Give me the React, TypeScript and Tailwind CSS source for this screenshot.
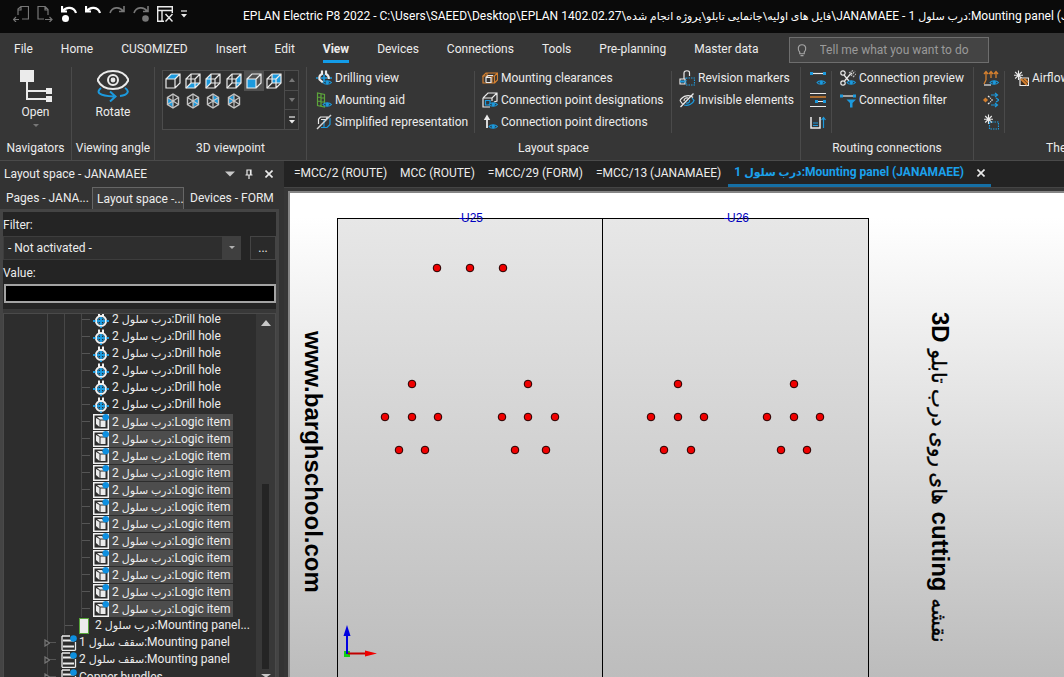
import React, { useState } from 'react';

const menuTabs = ['File', 'Home', 'CUSOMIZED', 'Insert', 'Edit', 'View', 'Devices', 'Connections', 'Tools', 'Pre-planning', 'Master data'];

const docTabs = ['=MCC/2 (ROUTE)', 'MCC (ROUTE)', '=MCC/29 (FORM)', '=MCC/13 (JANAMAEE)'];

const W = '#ebebeb';
const B = '#1c9ade';
const O = '#d5802f';

type IconProps = { children: React.ReactNode; size?: string; box?: string };

const Icon: React.FC<IconProps> = ({ children, size = 'h-4 w-4', box = '0 0 16 16' }) => (
  <svg className={`${size} shrink-0`} viewBox={box} fill="none" stroke={W} strokeWidth="1.2" aria-hidden="true">
    {children}
  </svg>
);

// Persian runs are set one size down, the glyphs are larger than the Latin ones
const Fa: React.FC<{ children: React.ReactNode }> = ({ children }) => <span className="text-[11px]">{children}</span>;

// Small blue eye shown in the lower right corner of many commands
const EyeBadge = () => (
  <g stroke={B} strokeWidth="1.1">
    <path d="M7 12.5C8.5 10.3 13.5 10.3 15.5 12.5C13.5 14.9 8.5 14.9 7 12.5Z" fill="#28404e" />
    <circle cx="11.3" cy="12.5" r="1.1" fill={B} />
  </g>
);

const cubeFaces: Record<string, string> = {
  top: '1,6 6,1 15,1 10,6',
  bottom: '1,15 6,10 15,10 10,15',
  left: '1,6 6,1 6,10 1,15',
  right: '10,6 15,1 15,10 10,15',
  front: '1,6 10,6 10,15 1,15',
  back: '6,1 15,1 15,10 6,10',
};

const Cube: React.FC<{ face: string }> = ({ face }) => (
  <Icon>
    <polygon points={cubeFaces[face]} fill={B} stroke="none" />
    <path d="M1 6H10V15H1ZM1 6L6 1H15V10L10 15M10 6L15 1" />
    {face !== 'top' && face !== 'front' && <path d="M6 1V10H15M6 10L1 15" />}
  </Icon>
);

const isoFaces: Record<string, string> = {
  sw: '3,5 8,9 8,14 3,11',
  se: '13,5 8,9 8,14 13,11',
  ne: '8,2 13,5 13,11 8,7',
  nw: '8,2 3,5 3,11 8,7',
};

const IsoCube: React.FC<{ face: string }> = ({ face }) => (
  <Icon>
    <polygon points={isoFaces[face]} fill={B} stroke="none" />
    <path d="M8 1L13.5 4.5V11.5L8 15L2.5 11.5V4.5Z" stroke="#c4c4c4" strokeWidth="1.4" />
    <path d="M2.5 4.5L8 8L13.5 4.5M8 8V15M2.5 11.5L8 8L13.5 11.5M8 1V8" stroke="#c4c4c4" />
  </Icon>
);

const DrillIcon = () => (
  <Icon>
    <path d="M6 0.500V4.500M10 0.500V4.500" stroke="#f2f2f2" strokeWidth="2" />
    <circle cx="8" cy="9" r="5" stroke="#f2f2f2" strokeWidth="2.200" />
    <circle cx="8" cy="9" r="3.300" fill="#2d2d2d" stroke={B} strokeWidth="1" />
    <path d="M0 9H2.500M4 9H12M13.500 9H16M8 5V13M8 14.500V16" stroke={B} strokeWidth="2" />
  </Icon>
);

const LogicIcon = () => (
  <Icon>
    <rect x="0.75" y="0.75" width="14.500" height="14.500" fill="#2d2d2d" stroke="#f2f2f2" strokeWidth="1.500" />
    <path d="M3 4L6.500 6V13L3 10Z" fill={W} stroke="none" />
    <path d="M4 3H9L12 5.500H7Z" fill={W} stroke="none" />
    <path d="M7.500 6.500H12.500V13H7.500Z" fill={W} stroke="none" />
    <circle cx="12.800" cy="3.300" r="3.300" fill="#0d8fe0" stroke="none" />
  </Icon>
);

const RailIcon = () => (
  <Icon>
    <path d="M1 1H9M1 1V15.300M14.500 7V15.300M1 15.300H14.500" strokeWidth="1.300" />
    <path d="M2 5.500H13M2 11.500H13" strokeWidth="2" />
    <circle cx="12.500" cy="3.500" r="3.300" fill="#0d8fe0" stroke="none" />
  </Icon>
);

const Snow = () => <path d="M5.500 0.500V10M1 5.200H10M2.200 2L8.800 8.500M8.800 2L2.200 8.500" strokeWidth="1.100" />;

const DrillingView = () => (
  <Icon>
    <path d="M6 0.500V4C3.500 5 3 7 3.500 9.500L7 12.500M10 0.500V4C12 5 13 6.500 12.800 9" strokeWidth="2.200" />
    <path d="M0 8H2M5 8H11M14 8H16M8 4.500V11" stroke={B} strokeWidth="1.700" />
    <EyeBadge />
  </Icon>
);

const MountingAid = () => (
  <Icon>
    <path d="M1.500 1V13.500L8.500 15V2.500ZM5 2V14M1.500 5L8.500 6M1.500 9L8.500 10" stroke="#5da53b" />
    <EyeBadge />
  </Icon>
);

const Simplified = () => (
  <Icon>
    <path d="M2.500 5L4.500 3H11.500L10 5.500M2.500 5V10M5 5.500H10" />
    <path d="M5 13.500H11L14 10.500V4M8 6V13" stroke={B} />
    <path d="M1 15L15 1" stroke="#d5d5d5" strokeWidth="1.400" />
  </Icon>
);

const Clearances = () => (
  <Icon>
    <path d="M1 6L4 3H15.500L12.500 6ZM1 6V13H12.500V6M12.500 13L15.500 10V3M5 3V6M10 13V6" stroke={O} />
    <path d="M4 12.500V7.500L6 5.500H11M4 7.500H9V12.500H4" />
  </Icon>
);

const Designations = () => (
  <Icon>
    <path d="M1 6L6 1H15V9L12 10M1 6H10L15 1M10 6V9M1 6V15H8" />
    <path d="M3.500 8.500H8V13H3.500Z" stroke={B} />
    <EyeBadge />
  </Icon>
);

const Directions = () => (
  <Icon>
    <path d="M5 14V5" strokeWidth="1.800" />
    <path d="M1.800 6L5 0.500L8.200 6Z" fill={W} stroke="none" />
    <EyeBadge />
  </Icon>
);

const Revision = () => (
  <Icon>
    <path d="M5 8.500V3C5 0 11 0 10.500 3V6M1 9H6V14H1Z" />
    <path d="M1 11.500H6" stroke={B} strokeWidth="2" />
    <path d="M7 8H15.500V15H7Z" stroke={B} strokeDasharray="1.500 1" />
  </Icon>
);

const Invisible = () => (
  <Icon>
    <path d="M1 8.500C4 3 11 2.500 14 5.500M3.500 12L1 8.500M5 9C5 6.500 7 5.500 9 6" />
    <path d="M5 13C9 14 14 12 15 8.500L13 6M7 11C10 11.500 11 9.500 10.500 8" stroke={B} />
    <path d="M1.500 15L14.500 1.500" strokeWidth="1.300" />
  </Icon>
);

const RouteView = () => (
  <Icon>
    <path d="M1 3.500H15" />
    <path d="M0 2H3V5H0ZM13 2H16V5H13Z" fill={B} stroke="none" />
    <EyeBadge />
  </Icon>
);

const RouteLines = () => (
  <Icon>
    <path d="M0 1.500H16M0 14.500H16M6 9.500H15" />
    <path d="M0 5H16" stroke={O} strokeWidth="1.500" />
    <path d="M5 8H8V11H5ZM13 8H16V11H13Z" fill={B} stroke="none" />
  </Icon>
);

const DuctFill = () => (
  <Icon>
    <path d="M1 3V14H10V3" strokeWidth="1.500" />
    <path d="M3 9H8M3 11.500H8M13.500 14V4M11.500 6L13.500 3.500L15.500 6" stroke={B} />
  </Icon>
);

const Preview = () => (
  <Icon>
    <circle cx="3" cy="3" r="2.200" />
    <circle cx="3" cy="13" r="2.200" />
    <path d="M4 5L9 11M4.500 11L10 4.500L12 3" />
    <path d="M11 6L15 1M9 3L13 0.500M13 7L16 4" stroke="#bdbdbd" strokeDasharray="2 1" />
    <EyeBadge />
  </Icon>
);

const FilterIcon = () => (
  <Icon>
    <path d="M1 4H15" />
    <path d="M0 2.500H3V5.500H0ZM13 2.500H16V5.500H13Z" fill={B} stroke="none" />
    <path d="M6.500 7.500H16L12.500 11V15.500H10V11Z" fill={B} stroke="none" />
  </Icon>
);

const Heat = () => (
  <Icon>
    <path d="M3 10V2M8 8V2M13 8V2M1 4L3 1.500L5 4M6 4L8 1.500L10 4M11 4L13 1.500L15 4M3 10L1 14" stroke={O} strokeWidth="1.300" />
    <path d="M1 15H8" />
    <EyeBadge />
  </Icon>
);

const Flow = () => (
  <Icon>
    <path d="M0 8L2.500 5.500L5 8L2.500 10.500Z" fill={O} stroke="none" />
    <path d="M5 4L8 6.500M5 12L8 9.500M8 8H11" strokeDasharray="2 1" />
    <path d="M8 3H14M12 1L14.500 3L12 5M8 13H14M12 11L14.500 13L12 15M13 6L16 8L13 10" stroke={B} />
  </Icon>
);

const Cooling = () => (
  <Icon>
    <Snow />
    <path d="M6.500 8H15.500V15H6.500Z" stroke={B} strokeDasharray="1.500 1" />
  </Icon>
);

const Airflow = () => (
  <Icon>
    <Snow />
    <path d="M7 8H15.500V15.500H7Z" fill="#3b2a1c" />
    <path d="M8 9L14 15M11 8.500L15 12.500" stroke={O} strokeWidth="1.800" />
  </Icon>
);

const Command: React.FC<{ icon: React.ReactNode; label: string }> = ({ icon, label }) => (
  <button className="flex h-[22px] items-center gap-[3px] whitespace-nowrap">
    {icon}
    <span>{label}</span>
  </button>
);

const IconCommand: React.FC<{ icon: React.ReactNode; label: string }> = ({ icon, label }) => (
  <button aria-label={label} className="flex h-[22px] items-center">
    {icon}
  </button>
);

const Group: React.FC<{ title: string; width: string; children: React.ReactNode }> = ({ title, width, children }) => (
  <section className={`${width} flex shrink-0 flex-col border-r border-[#4a4a4a]`}>
    <div className="flex h-[71px] min-w-0">{children}</div>
    <h2 className="text-center leading-5 whitespace-nowrap">{title}</h2>
  </section>
);

const TitleBar = () => (
  <header className="flex h-[33px] shrink-0 items-center overflow-hidden bg-[#0a0a0a] text-white">
    <div className="flex w-[243px] shrink-0 items-center gap-2 pb-1.5 pl-[13px]">
      <button aria-label="Previous page">
        <Icon><path d="M5 9V3L8 0.500H15.500V13H9M8 0.500V4H5M0.500 13.500H6M3 11L0.500 13.500L3 16" stroke="#777" /></Icon>
      </button>
      <button aria-label="Next page">
        <Icon><path d="M7 13H1V0.500H8L11 3.500V9M8 0.500V4H11M8 13.500H15M12.500 11L15 13.500L12.500 16" stroke="#777" /></Icon>
      </button>
      <button aria-label="Undo list">
        <Icon><path d="M1 0V5.500H6M2 5C5 0.500 13 0.500 15 7" strokeWidth="2.200" stroke="#fff" /><circle cx="4.500" cy="12.500" r="3.500" fill="#fff" stroke="none" /></Icon>
      </button>
      <button aria-label="Undo">
        <Icon><path d="M1 0V5.500H6M2 5C5 0.500 13 0.500 15 7" strokeWidth="2.200" stroke="#fff" /></Icon>
      </button>
      <button aria-label="Redo">
        <Icon><path d="M15 0V5.500H10M14 5C11 0.500 3 0.500 1 7" strokeWidth="1.600" stroke="#777" /></Icon>
      </button>
      <button aria-label="Redo list">
        <Icon><path d="M15 0V5.500H10M14 5C11 0.500 3 0.500 1 7" strokeWidth="1.600" stroke="#777" /><circle cx="12.500" cy="12.500" r="3.300" fill="#777" stroke="none" /></Icon>
      </button>
      <button aria-label="Close layout">
        <Icon><path d="M7 15.300H0.700V0.700H15.300V7M0.700 4.500H15.300M5 4.500V15M8.500 8L15.500 15.500M15.500 8L8.500 15.500" strokeWidth="1.400" /></Icon>
      </button>
      <button aria-label="Customize toolbar">
        <Icon size="h-2 w-1.5" box="0 0 6 8"><path d="M0 1H6" /><path d="M0 4H6L3 7.500Z" fill={W} stroke="none" /></Icon>
      </button>
    </div>
    <h1 className="whitespace-nowrap">
      {'EPLAN Electric P8 2022 - C:\\Users\\SAEED\\Desktop\\EPLAN 1402.02.27\\'}
      <Fa>{'فایل های اولیه\\جانمایی تابلو\\پروژه انجام شده'}</Fa>
      {'\\JANAMAEE - '}
      <Fa>درب سلول</Fa>
      {' 1:Mounting panel (JANAMAEE)'}
    </h1>
  </header>
);

const Menu: React.FC = () => {
  const [active, setActive] = useState('View');

  return (
    <nav className="flex h-[34px] shrink-0 items-center pl-[14px]">
      <div className="flex shrink-0 gap-7">
        {menuTabs.map((tab) => (
          <button
            key={tab}
            onClick={() => setActive(tab)}
            className={`h-[26px] border-b-3 whitespace-nowrap ${tab === active ? 'border-[#139ce8] font-bold' : 'border-transparent'}`}
          >
            {tab}
          </button>
        ))}
      </div>
      <label className="ml-[30px] flex h-[26px] w-[200px] items-center gap-3 border border-[#6e6e6e] bg-[#444] pl-1.5">
        <Icon size="h-3.5 w-3">
          <path d="M5 11C2 8 2 1 8 1S14 8 11 11V13H5ZM6 15.500H10" stroke="#a5a5a5" strokeWidth="1.500" />
        </Icon>
        <input aria-label="Search commands" placeholder="Tell me what you want to do" className="w-full bg-transparent outline-none placeholder:text-[#9a9a9a]" />
      </label>
    </nav>
  );
};

const Ribbon = () => (
  <div className="flex h-[93px] shrink-0 overflow-hidden">
    <Group title="Navigators" width="w-[72px]">
      <button className="flex w-full flex-col items-center pt-[3px]">
        <Icon size="h-8 w-8" box="0 0 32 32">
          <path d="M0 0H14V12H0ZM26 18H32V24H26ZM26 26H32V32H26Z" fill={W} stroke="none" />
          <path d="M7 12V29H26M7 21H26" strokeWidth="2" />
        </Icon>
        <span className="pt-0.5">Open</span>
        <Icon size="mt-1 h-1 w-1.5" box="0 0 6 4"><path d="M0 0H6L3 3Z" fill="#777" stroke="none" /></Icon>
      </button>
    </Group>
    <Group title="Viewing angle" width="w-[83px]">
      <button className="flex w-full flex-col items-center pt-[3px]">
        <Icon size="h-8 w-8" box="0 0 32 32">
          <path d="M0.500 10C6 -2 26 -2 31.500 10C26 22 6 22 0.500 10Z" strokeWidth="2" />
          <circle cx="16" cy="10" r="5" strokeWidth="2" />
          <circle cx="16" cy="10" r="1.800" fill={W} />
          <path d="M4 18C-1 22 1 26 17 26.500M28 18C33 21 31 25 23 26M13 21.500L18.500 26.500L13 31.500" stroke={B} strokeWidth="2" />
        </Icon>
        <span className="pt-0.5">Rotate</span>
      </button>
    </Group>
    <Group title="3D viewpoint" width="w-[152px]">
      <div className="mt-[3px] ml-[7px] flex h-[60px] border border-[#4c4c4c] bg-[#303030]">
        <div className="grid w-[121px] auto-rows-[20px] grid-cols-6">
          {['top', 'bottom', 'left', 'right', 'front', 'back'].map((face) => (
            <button key={face} aria-label={`View ${face}`} className={`flex items-center justify-center ${face === 'front' ? 'bg-[#505050]' : ''}`}>
              <Cube face={face} />
            </button>
          ))}
          {['sw', 'se', 'ne', 'nw'].map((face) => (
            <button key={face} aria-label={`View ${face}`} className="flex items-center justify-center">
              <IsoCube face={face} />
            </button>
          ))}
        </div>
        <div className="flex w-[14px] flex-col divide-y divide-[#4c4c4c] border-l border-[#4c4c4c]">
          <button aria-label="Scroll up" className="flex flex-1 items-center justify-center">
            <Icon size="h-1 w-1.5" box="0 0 6 4"><path d="M0 4H6L3 0Z" fill="#777" stroke="none" /></Icon>
          </button>
          <button aria-label="Scroll down" className="flex flex-1 items-center justify-center">
            <Icon size="h-1 w-1.5" box="0 0 6 4"><path d="M0 0H6L3 4Z" fill="#777" stroke="none" /></Icon>
          </button>
          <button aria-label="More viewpoints" className="flex flex-1 items-center justify-center">
            <Icon size="h-2 w-1.5" box="0 0 6 8"><path d="M0 1H6" /><path d="M0 4H6L3 7.500Z" fill={W} stroke="none" /></Icon>
          </button>
        </div>
      </div>
    </Group>
    <Group title="Layout space" width="w-[494px]">
      <div className="flex w-[167px] flex-col pl-[9px]">
        <Command icon={<DrillingView />} label="Drilling view" />
        <Command icon={<MountingAid />} label="Mounting aid" />
        <Command icon={<Simplified />} label="Simplified representation" />
      </div>
      <div className="mt-1 flex h-[62px] w-[197px] flex-col border-l border-[#4a4a4a] pl-[7px]">
        <div className="-mt-1">
          <Command icon={<Clearances />} label="Mounting clearances" />
          <Command icon={<Designations />} label="Connection point designations" />
          <Command icon={<Directions />} label="Connection point directions" />
        </div>
      </div>
      <div className="mt-1 flex h-[62px] flex-col border-l border-[#4a4a4a] pl-[7px]">
        <div className="-mt-1">
          <Command icon={<Revision />} label="Revision markers" />
          <Command icon={<Invisible />} label="Invisible elements" />
        </div>
      </div>
    </Group>
    <Group title="Routing connections" width="w-[173px]">
      <div className="flex w-[30px] flex-col pl-[9px]">
        <IconCommand icon={<RouteView />} label="Routing view" />
        <IconCommand icon={<RouteLines />} label="Routing paths" />
        <IconCommand icon={<DuctFill />} label="Duct fill" />
      </div>
      <div className="mt-1 flex h-[62px] flex-col border-l border-[#4a4a4a] pl-[8px]">
        <div className="-mt-1">
          <Command icon={<Preview />} label="Connection preview" />
          <Command icon={<FilterIcon />} label="Connection filter" />
        </div>
      </div>
    </Group>
    <Group title="Thermal design" width="w-[228px]">
      <div className="flex w-[30px] flex-col pl-[9px]">
        <IconCommand icon={<Heat />} label="Heat" />
        <IconCommand icon={<Flow />} label="Flow" />
        <IconCommand icon={<Cooling />} label="Cooling" />
      </div>
      <div className="mt-1 flex h-[62px] flex-col border-l border-[#4a4a4a] pl-[8px]">
        <div className="-mt-1">
          <Command icon={<Airflow />} label="Airflow" />
        </div>
      </div>
    </Group>
  </div>
);

const Tree = () => (
  <div className="flex min-h-0 flex-1 overflow-hidden border-x border-t border-[#4a4a4a] bg-[#2d2d2d]">
    <ul className="-mt-[3px] ml-[43px] min-w-0 flex-1 border-l border-[#474747]">
      <li className="ml-4 border-l border-[#474747]">
        <ul className="ml-4 border-l border-[#474747]">
          {Array.from({ length: 6 }, (_, i) => (
            <li key={i} className="flex h-[17px] items-center">
              <span className="mr-[3px] w-2 border-t border-[#555]" />
              <DrillIcon />
              <span className="pl-[3px] whitespace-nowrap"><Fa>درب سلول</Fa> 2:Drill hole</span>
            </li>
          ))}
          {Array.from({ length: 12 }, (_, i) => (
            <li key={i} className="flex h-[17px] items-center">
              <span className="mr-[3px] w-2 border-t border-[#555]" />
              <LogicIcon />
              <span className="h-4 bg-[#4d4d4d] px-[3px] leading-4 whitespace-nowrap"><Fa>درب سلول</Fa> 2:Logic item</span>
            </li>
          ))}
        </ul>
        <div className="flex h-[17px] items-center">
          <span className="mr-1.5 w-2 border-t border-[#555]" />
          <span className="mr-1.5 h-4 w-2.5 shrink-0 border border-[#57a639] bg-[#ececec]" />
          <span className="whitespace-nowrap"><Fa>درب سلول</Fa> 2:Mounting panel...</span>
        </div>
      </li>
      {[['سقف سلول', ' 1:Mounting panel'], ['سقف سلول', ' 2:Mounting panel'], ['', 'Copper bundles']].map(([fa, name]) => (
        <li key={name} className="-ml-1 flex h-[17px] items-center">
          <Icon size="h-2 w-1.5" box="0 0 6 8"><path d="M1 1V7L5.500 4Z" fill="#2d2d2d" stroke="#777" /></Icon>
          <span className="mr-[5px] w-1.5 border-t border-[#555]" />
          <RailIcon />
          <span className="pl-0.5 whitespace-nowrap">{fa && <Fa>{fa}</Fa>}{name}</span>
        </li>
      ))}
    </ul>
    <div className="flex w-[19px] shrink-0 flex-col items-center bg-[#383838] pt-1.5">
      <Icon size="h-1.5 w-2.5" box="0 0 10 6"><path d="M0 6H10L5 0Z" fill="#c8c8c8" stroke="none" /></Icon>
      <div className="mt-[158px] w-[7px] flex-1 bg-[#242424]" />
      <Icon size="mt-1 h-1 w-2.5" box="0 0 10 4"><path d="M0 1H10L6 4H4Z" fill="#c8c8c8" stroke="none" /></Icon>
    </div>
  </div>
);

const SidePanel = () => (
  <aside className="flex w-[284px] shrink-0 flex-col border-t border-[#4a4a4a] bg-[#333] pr-[5px]">
    <div className="flex h-[26px] shrink-0 items-center pr-1.5 pl-1">
      <h2 className="flex-1">Layout space - JANAMAEE</h2>
      <button aria-label="Panel menu" className="mr-2.5">
        <Icon size="h-1.5 w-2.5" box="0 0 10 6"><path d="M0 0.500H10L5 5.500Z" fill="#c8c8c8" stroke="none" /></Icon>
      </button>
      <button aria-label="Pin panel" className="mr-3">
        <Icon size="h-2.5 w-2" box="0 0 8 10"><path d="M2 6V1H6V6M0.500 6H7.500M4 6V10M5.500 1V6" /></Icon>
      </button>
      <button aria-label="Close panel">
        <Icon size="h-2 w-2" box="0 0 8 8"><path d="M0.500 0.500L7.500 7.500M7.500 0.500L0.500 7.500" strokeWidth="1.600" /></Icon>
      </button>
    </div>
    <div className="flex h-[22px] shrink-0 items-center whitespace-nowrap">
      <button className="w-[92px] pl-1.5 text-left">Pages - JANA...</button>
      <button className="h-[22px] w-[92px] border border-b-0 border-[#666] bg-[#3c3c3c] pl-1 text-left">Layout space -...</button>
      <button className="pl-1.5">Devices - FORM</button>
    </div>
    <div className="flex min-h-0 flex-1 flex-col border-x-3 border-t-3 border-b-0 border-[#444] bg-[#242424]">
      <form className="flex shrink-0 flex-col pb-1.5">
        <label htmlFor="filter" className="pt-0.5 leading-[22px]">Filter:</label>
        <div className="flex h-6 gap-[9px]">
          <div className="relative flex flex-1">
            <select id="filter" className="flex-1 appearance-none border border-[#3d3d3d] bg-[#2e2e2e] pl-1 outline-none">
              <option>- Not activated -</option>
            </select>
            <span className="pointer-events-none absolute inset-y-0 right-0 flex w-[19px] items-center justify-center bg-[#3f3f3f]">
              <Icon size="h-1 w-1.5" box="0 0 6 4"><path d="M0 0H6L3 3Z" fill="#b0b0b0" stroke="none" /></Icon>
            </span>
          </div>
          <button type="button" className="w-[26px] border border-[#444] bg-[#2a2a2a]">...</button>
        </div>
        <label htmlFor="value" className="pt-0.5 leading-[22px]">Value:</label>
        <input id="value" className="ml-px h-[19px] border-2 border-[#a3a3a3] bg-black px-1 outline-none" />
      </form>
      <div className="h-1 shrink-0 bg-[#383838]" />
      <Tree />
    </div>
  </aside>
);

const holes = [
  [437, 268], [470, 268], [503, 268],
  [412, 384], [385, 417], [412, 417], [438, 417], [399, 450], [425, 450],
  [528, 384], [502, 417], [528, 417], [555, 417], [515, 450], [546, 450],
  [678, 384], [651, 417], [678, 417], [704, 417], [664, 450], [691, 450],
  [794, 384], [767, 417], [794, 417], [820, 417], [781, 450], [807, 450],
];

const Drawing = () => (
  <svg className="block h-full w-full" fontFamily='"Liberation Sans", "DejaVu Sans", sans-serif'>
    <defs>
      <linearGradient id="plate" x1="0" y1="0" x2="0" y2="1">
        <stop offset="0" stopColor="#e7e7e7" />
        <stop offset="1" stopColor="#bcbcbc" />
      </linearGradient>
    </defs>
    <g transform="translate(-290 -193)">
      <rect x="337.500" y="218.500" width="531" height="470" fill="url(#plate)" stroke="#000" />
      <path d="M602.500 218V690" stroke="#000" />
      <g fill="#0000c0" fontSize="12">
        <text x="461" y="222">U25</text>
        <text x="727" y="222">U26</text>
        <path d="M459 218.500H466M724 218.500H730" stroke="#0000c0" />
      </g>
      {holes.map(([x, y]) => (
        <circle key={`${x}-${y}`} cx={x} cy={y} r="3.800" fill="#f00000" stroke="#200000" />
      ))}
      <text transform="translate(305 331) rotate(90)" fontSize="24" fontWeight="bold">www.barghschool.com</text>
      <text transform="translate(932 312) rotate(90)" fontSize="24" fontWeight="bold" direction="rtl" textAnchor="end">
        <tspan fontSize="20" fontWeight="normal" stroke="#000" strokeWidth="0.400">نقشه</tspan> cutting <tspan fontSize="20" fontWeight="normal" stroke="#000" strokeWidth="0.400">های روی درب تابلو</tspan> 3D
      </text>
      <rect x="344" y="651" width="6" height="6" fill="#14d014" />
      <path d="M347 654V634" stroke="#0000e0" strokeWidth="2" />
      <path d="M343.500 636L347 625L350.500 636Z" fill="#0000e0" />
      <path d="M348 653.500H368" stroke="#c00000" strokeWidth="2" />
      <path d="M365 650.500L377 653.500L365 656.500Z" fill="#f00000" />
    </g>
  </svg>
);

const Workspace = () => (
  <main className="flex min-w-0 flex-1 flex-col border-t border-[#4a4a4a]">
    <div className="flex h-[27px] shrink-0 items-end gap-[13px] overflow-hidden border-b border-[#444] bg-[#232323] pl-2.5 whitespace-nowrap">
      {docTabs.map((tab) => (
        <button key={tab} className="h-[26px] border-b-3 border-transparent">{tab}</button>
      ))}
      <div className="-ml-1.5 flex h-[26px] items-center gap-[13px] border-b-3 border-[#156fa5] px-1.5">
        <button className="font-bold text-[#1ba1ec]"><Fa>درب سلول</Fa> 1:Mounting panel (JANAMAEE)</button>
        <button aria-label="Close tab">
          <Icon size="h-2 w-2" box="0 0 8 8"><path d="M0.500 0.500L7.500 7.500M7.500 0.500L0.500 7.500" strokeWidth="1.600" /></Icon>
        </button>
      </div>
    </div>
    <div className="mt-[3px] ml-1 min-h-0 flex-1 border-t-2 border-l-2 border-[#858585] bg-linear-to-b from-white from-5% to-[#bcbcbc]">
      <Drawing />
    </div>
  </main>
);

const App: React.FC = () => (
  <div className="flex h-screen flex-col overflow-hidden bg-[#363636] font-['Roboto','DejaVu_Sans',sans-serif] text-[12px] leading-4 text-[#ececec]">
    <TitleBar />
    <Menu />
    <Ribbon />
    <div className="flex min-h-0 flex-1">
      <SidePanel />
      <Workspace />
    </div>
  </div>
);

export default App;
